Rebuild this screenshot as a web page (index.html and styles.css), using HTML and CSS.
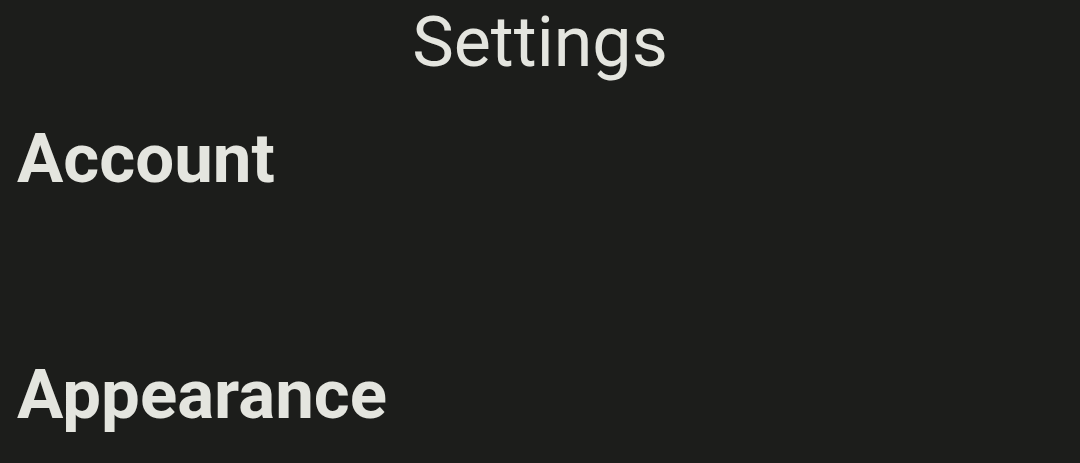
FILE: index.html
```html
<!DOCTYPE html>
<html lang="en">
<head>
    <meta charset="UTF-8">
    <meta name="viewport" content="width=device-width, initial-scale=1.0">
    <title>Settings</title>
    <link rel="stylesheet" href="styles.css">
</head>
<body>
    <div class="settings">
        <h1 class="title">Settings</h1>

        <div class="groups">
            <section class="group">
                <h2 class="group-title">Account</h2>
            </section>

            <section class="group">
                <h2 class="group-title">Appearance</h2>
            </section>
        </div>
    </div>
</body>
</html>
```

FILE: styles.css
```css
* {
    margin: 0;
    padding: 0;
    box-sizing: border-box;
}

body {
    height: 100vh;
    background: #1c1d1b;
    color: #e4e5df;
    font-family: Roboto, 'Noto Sans', sans-serif;
    overflow: hidden;
}

.settings {
    display: flex;
    flex-direction: column;
    padding: 7px 17px 0;
}

.title {
    font-size: 70px;
    font-weight: 400;
    line-height: 1;
    text-align: center;
    margin-bottom: 47px;
}

.groups {
    display: flex;
    flex-direction: column;
    gap: 167px;
}

.group-title {
    font-size: 69px;
    font-weight: 700;
    line-height: 1;
}
```
